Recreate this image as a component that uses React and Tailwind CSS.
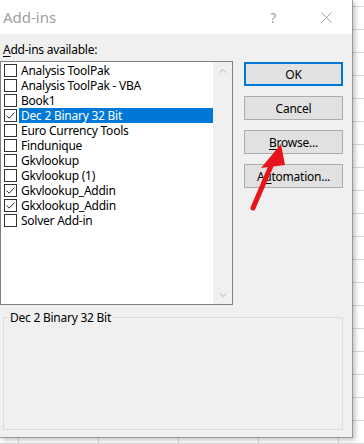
import { ChevronUp, ChevronDown } from "lucide-react";

const ITEMS = [
  { name: "Analysis ToolPak", on: false },
  { name: "Analysis ToolPak - VBA", on: false },
  { name: "Book1", on: false },
  { name: "Dec 2 Binary 32 Bit", on: true, sel: true },
  { name: "Euro Currency Tools", on: false },
  { name: "Findunique", on: false },
  { name: "Gkvlookup", on: false },
  { name: "Gkvlookup (1)", on: false },
  { name: "Gkvlookup_Addin", on: true },
  { name: "Gkxlookup_Addin", on: true },
  { name: "Solver Add-in", on: false },
];

function Check({ on }) {
  return (
    <span className="flex h-[13px] w-[13px] shrink-0 items-center justify-center border border-[#333] bg-white">
      {on && (
        <svg width="11" height="11" viewBox="0 0 11 11">
          <path d="M1.5 5.5 L4.2 8.2 L9.5 2.5" fill="none" stroke="#333" strokeWidth="1" />
        </svg>
      )}
    </span>
  );
}

function Button({ children, primary }) {
  return (
    <button
      className={`flex h-[24px] w-[99px] items-center justify-center bg-[#e1e1e1] text-[12px] text-black ${
        primary ? "border-2 border-[#0078d7]" : "border border-[#adadad]"
      }`}
    >
      {children}
    </button>
  );
}

export default function App() {
  return (
    <div className="relative flex h-[444px] w-[364px] overflow-hidden bg-white bg-[linear-gradient(to_right,#d9d9d9_1px,transparent_1px),linear-gradient(to_bottom,#d9d9d9_1px,transparent_1px)] bg-size-[80px_23px] bg-position-[18px_6px] font-['Noto_Sans',sans-serif] text-[12px] leading-[15px] tracking-[-0.25px] text-black">
      <div className="flex h-[438px] w-[353px] shrink-0 flex-col border-r border-b border-[#9a9a9a] bg-[#f0f0f0] shadow-[2px_2px_5px_rgba(0,0,0,0.25)]">
        {/* title bar */}
        <div className="flex h-[34px] shrink-0 items-center bg-white pl-[3px] pr-[20px]">
          <span className="text-[15px] tracking-normal text-[#a0a0a0]">Add-ins</span>
          <span className="ml-auto mr-[45px] text-[14px] text-[#a0a0a0]">?</span>
          <svg width="11" height="11" viewBox="0 0 11 11">
            <path d="M0.5 0.5 L10.5 10.5 M10.5 0.5 L0.5 10.5" stroke="#a0a0a0" strokeWidth="1" />
          </svg>
        </div>

        <div className="mt-[8px] pl-[3px]">
          <span className="underline underline-offset-2">A</span>dd-ins available:
        </div>

        <div className="mt-[4px] flex">
          {/* list box */}
          <div className="flex h-[244px] w-[233px] border border-[#828282] bg-white">
            <div className="flex flex-1 flex-col pt-[1px]">
              {ITEMS.map((it) => (
                <div key={it.name} className="flex h-[15px] items-center">
                  <div className="flex w-[18px] justify-center pl-[1px]">
                    <Check on={it.on} />
                  </div>
                  <span
                    className={`flex h-[15px] flex-1 items-center whitespace-nowrap pl-[2px] ${
                      it.sel ? "bg-[#0078d7] text-white" : ""
                    }`}
                  >
                    {it.name}
                  </span>
                </div>
              ))}
            </div>
            <div className="flex w-[19px] flex-col items-center justify-between bg-[#f0f0f0] py-[3px]">
              <ChevronUp size={12} strokeWidth={1.5} className="text-[#a6a6a6]" />
              <ChevronDown size={12} strokeWidth={1.5} className="text-[#a6a6a6]" />
            </div>
          </div>

          {/* buttons */}
          <div className="ml-[11px] flex flex-col gap-[10px] pt-[1px]">
            <Button primary>OK</Button>
            <Button>Cancel</Button>
            <Button>
              <span>
                <span className="underline underline-offset-2">B</span>rowse...
              </span>
            </Button>
            <Button>
              <span>
                A<span className="underline underline-offset-2">u</span>tomation...
              </span>
            </Button>
          </div>
        </div>

        {/* description group */}
        <div className="relative mt-[12px] ml-[3px] h-[113px] w-[340px] border border-[#dcdcdc]">
          <span className="absolute -top-[8px] left-[5px] bg-[#f0f0f0] px-[1px]">Dec 2 Binary 32 Bit</span>
        </div>
      </div>

      {/* red annotation arrow */}
      <svg className="absolute left-0 top-0" width="364" height="444" viewBox="0 0 364 444">
        <path d="M253 208 L271 166" stroke="#e8141c" strokeWidth="5" strokeLinecap="round" />
        <polygon points="281,144 261,168 285,165" fill="#e8141c" />
      </svg>
    </div>
  );
}
